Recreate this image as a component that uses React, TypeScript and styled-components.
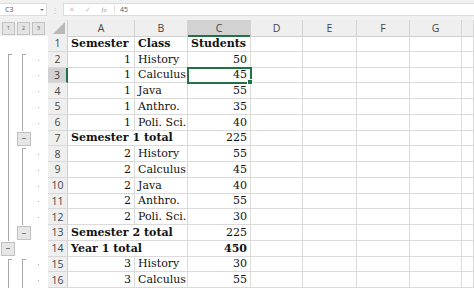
import styled, { createGlobalStyle, css } from "styled-components";

const GlobalStyle = createGlobalStyle`
  html, body {
    margin: 0;
    padding: 0;
    background: #fff;
  }
  body {
    width: 474px;
    height: 290px;
    overflow: hidden;
  }
`;

const COLS = "48px 20px 67px 53px 63px 52px 54px 53px 52px 1fr";
const GRID = "#dadada";
const GREEN = "#217346";

type LaneKind = "none" | "line" | "start" | "button" | "dot";

// lane widths and x of the bracket line inside each lane
const LANES = [
  { w: 16, x: 8 },
  { w: 15, x: 6 },
  { w: 17, x: 7 },
];

const Window = styled.div`
  width: 474px;
  height: 290px;
  overflow: hidden;
  display: flex;
  flex-direction: column;
  font-family: "Open Sans", "Noto Sans", sans-serif;
`;

const TopBar = styled.div`
  height: 20px;
  display: flex;
  align-items: center;
  background: #f1f1f1;
  padding-bottom: 1px;
  box-sizing: border-box;
`;

const NameBox = styled.div`
  width: 47px;
  height: 13px;
  box-sizing: border-box;
  background: #fff;
  border: 1px solid #dcdcdc;
  border-left: none;
  display: flex;
  align-items: center;
  justify-content: space-between;
  padding: 0 2px 0 5px;
  font-size: 7px;
  color: #555;
`;

const Caret = styled.span`
  width: 0;
  height: 0;
  border-left: 2px solid transparent;
  border-right: 2px solid transparent;
  border-top: 2px solid #777;
`;

const Grip = styled.div`
  width: 16px;
  display: flex;
  justify-content: center;
  color: #c4c4c4;
  font-size: 8px;
`;

const FormulaBox = styled.div`
  flex: 1;
  height: 13px;
  box-sizing: border-box;
  background: #fff;
  border: 1px solid #dcdcdc;
  border-right: none;
  display: flex;
  align-items: center;
  font-size: 7px;
  color: #555;
`;

const FxTool = styled.span`
  width: 16px;
  text-align: center;
  color: #c2c2c2;
  font-size: 7px;
`;

const FxItalic = styled(FxTool)`
  font-family: "Liberation Serif", serif;
  font-style: italic;
  color: #9a9a9a;
`;

const FxDivider = styled.span`
  width: 1px;
  height: 9px;
  background: #e2e2e2;
  margin: 0 5px 0 2px;
`;

const Sheet = styled.div`
  display: flex;
  flex-direction: column;
`;

const Row = styled.div<{ $h: number }>`
  display: grid;
  grid-template-columns: ${COLS};
  height: ${({ $h }) => $h}px;
  flex: none;
`;

const LevelBar = styled.div`
  background: #efefef;
  display: flex;
  align-items: center;
  gap: 2px;
  padding-left: 2px;
  border-bottom: 1px solid #d6d6d6;
`;

const LevelButton = styled.div`
  width: 13px;
  height: 13px;
  box-sizing: border-box;
  border: 1px solid #c2c2c2;
  background: #e4e4e4;
  font-size: 6px;
  color: #666;
  display: flex;
  align-items: center;
  justify-content: center;
`;

const Corner = styled.div`
  background: #efefef;
  border-right: 1px solid #cfcfcf;
  border-bottom: 1px solid #cfcfcf;
  display: flex;
  align-items: flex-end;
  justify-content: flex-end;
  padding: 0 2px 2px 0;
  box-sizing: border-box;

  &::after {
    content: "";
    width: 12px;
    height: 12px;
    background: #b8b8b8;
    clip-path: polygon(100% 0, 100% 100%, 0 100%);
  }
`;

const ColHead = styled.div<{ $active?: boolean }>`
  background: ${({ $active }) => ($active ? "#d2d2d2" : "#efefef")};
  border-right: 1px solid #d4d4d4;
  border-bottom: ${({ $active }) => ($active ? `2px solid ${GREEN}` : "1px solid #cfcfcf")};
  box-sizing: border-box;
  display: flex;
  align-items: center;
  justify-content: center;
  font-size: 10.5px;
  color: #444;
  padding-top: ${({ $active }) => ($active ? "1px" : "0")};
`;

const RowHead = styled.div<{ $active?: boolean }>`
  background: ${({ $active }) => ($active ? "#d2d2d2" : "#efefef")};
  border-right: ${({ $active }) => ($active ? `2px solid ${GREEN}` : "1px solid #cfcfcf")};
  border-bottom: 1px solid #d8d8d8;
  box-sizing: border-box;
  display: flex;
  align-items: center;
  justify-content: center;
  font-size: 10.5px;
  color: #444;
`;

const Gutter = styled.div`
  display: flex;
  background: #fff;
`;

const Lane = styled.div<{ $w: number; $x: number; $kind: LaneKind }>`
  position: relative;
  width: ${({ $w }) => $w}px;
  flex: none;

  ${({ $kind, $x }) =>
    ($kind === "line" || $kind === "start") &&
    css`
      &::before {
        content: "";
        position: absolute;
        left: ${$x}px;
        top: ${$kind === "start" ? "2px" : "0"};
        bottom: 0;
        width: 1px;
        background: #a8a8a8;
      }
    `}

  ${({ $kind, $x }) =>
    $kind === "start" &&
    css`
      &::after {
        content: "";
        position: absolute;
        left: ${$x}px;
        top: 2px;
        width: 4px;
        height: 1px;
        background: #a8a8a8;
      }
    `}

  ${({ $kind, $x }) =>
    $kind === "dot" &&
    css`
      &::before {
        content: "";
        position: absolute;
        left: ${$x}px;
        top: 50%;
        width: 1px;
        height: 1px;
        background: #b0b0b0;
      }
    `}
`;

const MinusButton = styled.div`
  position: absolute;
  left: 1px;
  top: 1px;
  width: 14px;
  height: 14px;
  box-sizing: border-box;
  border: 1px solid #c0c0c0;
  background: #e6e6e6;
  display: flex;
  align-items: center;
  justify-content: center;

  &::after {
    content: "";
    width: 4px;
    height: 1px;
    background: #777;
  }
`;

const Cell = styled.div<{
  $align?: "left" | "right";
  $bold?: boolean;
  $span?: number;
  $selected?: boolean;
}>`
  position: relative;
  grid-column: span ${({ $span }) => $span || 1};
  border-right: 1px solid ${GRID};
  border-bottom: 1px solid ${GRID};
  box-sizing: border-box;
  display: flex;
  align-items: flex-end;
  justify-content: ${({ $align }) => ($align === "right" ? "flex-end" : "flex-start")};
  padding: 0 3px 1px 3px;
  font-family: "DejaVu Serif", "Liberation Serif", serif;
  font-size: 11px;
  line-height: 13px;
  font-weight: ${({ $bold }) => ($bold ? 700 : 400)};
  color: #111;
  white-space: nowrap;
  overflow: visible;

  ${({ $selected }) =>
    $selected &&
    css`
      outline: 2px solid ${GREEN};
      outline-offset: -1px;
      z-index: 1;

      &::after {
        content: "";
        position: absolute;
        right: -3px;
        bottom: -3px;
        width: 4px;
        height: 4px;
        background: ${GREEN};
        border: 1px solid #fff;
      }
    `}
`;

type SheetRow = {
  a: string;
  b?: string;
  c: string;
  kind: "head" | "detail" | "total" | "grand";
  lanes: [LaneKind, LaneKind, LaneKind];
};

const D: [LaneKind, LaneKind, LaneKind] = ["line", "line", "dot"];
const S: [LaneKind, LaneKind, LaneKind] = ["start", "start", "dot"];

const rows: SheetRow[] = [
  { a: "Semester", b: "Class", c: "Students", kind: "head", lanes: ["none", "none", "none"] },
  { a: "1", b: "History", c: "50", kind: "detail", lanes: S },
  { a: "1", b: "Calculus", c: "45", kind: "detail", lanes: D },
  { a: "1", b: "Java", c: "55", kind: "detail", lanes: D },
  { a: "1", b: "Anthro.", c: "35", kind: "detail", lanes: D },
  { a: "1", b: "Poli. Sci.", c: "40", kind: "detail", lanes: D },
  { a: "Semester 1 total", c: "225", kind: "total", lanes: ["line", "button", "none"] },
  { a: "2", b: "History", c: "55", kind: "detail", lanes: ["line", "start", "dot"] },
  { a: "2", b: "Calculus", c: "45", kind: "detail", lanes: D },
  { a: "2", b: "Java", c: "40", kind: "detail", lanes: D },
  { a: "2", b: "Anthro.", c: "55", kind: "detail", lanes: D },
  { a: "2", b: "Poli. Sci.", c: "30", kind: "detail", lanes: D },
  { a: "Semester 2 total", c: "225", kind: "total", lanes: ["line", "button", "none"] },
  { a: "Year 1 total", c: "450", kind: "grand", lanes: ["button", "none", "none"] },
  { a: "3", b: "History", c: "30", kind: "detail", lanes: S },
  { a: "3", b: "Calculus", c: "55", kind: "detail", lanes: D },
];

const LETTERS = ["A", "B", "C", "D", "E", "F", "G", ""];
const ROW_H = 15.75;

const GutterCell = ({ lanes }: { lanes: LaneKind[] }) => (
  <Gutter>
    {lanes.map((kind, i) => (
      <Lane key={i} $w={LANES[i].w} $x={LANES[i].x} $kind={kind}>
        {kind === "button" && <MinusButton />}
      </Lane>
    ))}
  </Gutter>
);

const DataRow = ({ row, n }: { row: SheetRow; n: number }) => {
  const selectedRow = n === 3;
  const isHead = row.kind === "head";
  const spansAB = row.kind === "total" || row.kind === "grand";
  return (
    <Row $h={ROW_H}>
      <GutterCell lanes={row.lanes} />
      <RowHead $active={selectedRow}>{n}</RowHead>
      {spansAB ? (
        <Cell $span={2} $bold>
          {row.a}
        </Cell>
      ) : (
        <>
          <Cell $align={isHead ? "left" : "right"} $bold={isHead}>
            {row.a}
          </Cell>
          <Cell $bold={isHead}>{row.b}</Cell>
        </>
      )}
      <Cell $align={isHead ? "left" : "right"} $bold={isHead || row.kind === "grand"} $selected={selectedRow}>
        {row.c}
      </Cell>
      <Cell />
      <Cell />
      <Cell />
      <Cell />
      <Cell />
    </Row>
  );
};

export default function App() {
  return (
    <>
      <GlobalStyle />
      <Window>
        <TopBar>
          <NameBox>
            C3
            <Caret />
          </NameBox>
          <Grip>⋮</Grip>
          <FormulaBox>
            <FxTool>✕</FxTool>
            <FxTool>✓</FxTool>
            <FxItalic>fx</FxItalic>
            <FxDivider />
            45
          </FormulaBox>
        </TopBar>
        <Sheet>
          <Row $h={16}>
            <LevelBar>
              <LevelButton>1</LevelButton>
              <LevelButton>2</LevelButton>
              <LevelButton>3</LevelButton>
            </LevelBar>
            <Corner />
            {LETTERS.map((l, i) => (
              <ColHead key={i} $active={l === "C"}>
                {l}
              </ColHead>
            ))}
          </Row>
          {rows.map((row, i) => (
            <DataRow key={i} row={row} n={i + 1} />
          ))}
        </Sheet>
      </Window>
    </>
  );
}
